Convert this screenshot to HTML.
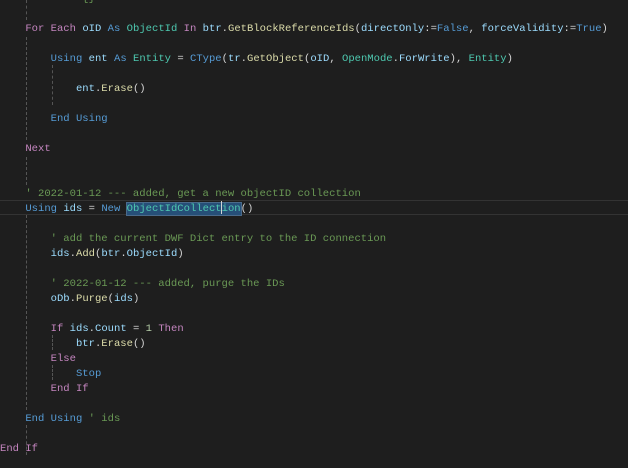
<!DOCTYPE html>
<html><head><style>
body{margin:0;width:628px;height:464px;background:#1e1e1e;overflow:hidden;position:relative;font-family:"Liberation Mono",monospace;font-size:10.55px;}
.l{position:absolute;left:0;height:15px;line-height:15px;white-space:pre;color:#d4d4d4;}
.k{color:#569cd6}.c{color:#c586c0}.t{color:#4ec9b0}.f{color:#dcdcaa}.v{color:#9cdcfe}.m{color:#6a9955}.n{color:#b5cea8}
.g{position:absolute;width:0;border-left:1px dashed #555;}
.cur{position:absolute;left:0;width:628px;top:200px;height:13px;border-top:1px solid #333;border-bottom:1px solid #333;}
.sel{background:#264f78;outline:1px solid #4a6a8a;}
#w{position:absolute;left:0;top:4px;width:628px;height:464px;}
</style></head><body>
<div class="cur"></div>
<div id="w">
<div class="g" style="left:26px;top:-4px;height:20px"></div>
<div class="g" style="left:26px;top:33px;height:103px"></div>
<div class="g" style="left:26px;top:153px;height:28px"></div>
<div class="g" style="left:26px;top:211px;height:195px"></div>
<div class="g" style="left:26px;top:421px;height:30px"></div>
<div class="g" style="left:52px;top:61px;height:40px"></div>
<div class="g" style="left:52px;top:331px;height:15px"></div>
<div class="g" style="left:52px;top:361px;height:15px"></div>
<div class="l" style="top:-12.5px">             <span class="m">{}</span></div>
<div class="l" style="top:17.5px">    <span class="c">For Each</span> <span class="v">oID</span> <span class="k">As</span> <span class="t">ObjectId</span> <span class="c">In</span> <span class="v">btr</span>.<span class="f">GetBlockReferenceIds</span>(<span class="v">directOnly</span>:=<span class="k">False</span>, <span class="v">forceValidity</span>:=<span class="k">True</span>)</div>
<div class="l" style="top:47.5px">        <span class="k">Using</span> <span class="v">ent</span> <span class="k">As</span> <span class="t">Entity</span> = <span class="k">CType</span>(<span class="v">tr</span>.<span class="f">GetObject</span>(<span class="v">oID</span>, <span class="t">OpenMode</span>.<span class="v">ForWrite</span>), <span class="t">Entity</span>)</div>
<div class="l" style="top:77.5px">            <span class="v">ent</span>.<span class="f">Erase</span>()</div>
<div class="l" style="top:107.5px">        <span class="k">End Using</span></div>
<div class="l" style="top:137.5px">    <span class="c">Next</span></div>
<div class="l" style="top:182.5px">    <span class="m">' 2022-01-12 --- added, get a new objectID collection</span></div>
<div class="l" style="top:197.5px">    <span class="k">Using</span> <span class="v">ids</span> = <span class="k">New</span> <span class="t sel">ObjectIdCollection</span>()</div>
<div class="l" style="top:227.5px">        <span class="m">' add the current DWF Dict entry to the ID connection</span></div>
<div class="l" style="top:242.5px">        <span class="v">ids</span>.<span class="f">Add</span>(<span class="v">btr</span>.<span class="v">ObjectId</span>)</div>
<div class="l" style="top:272.5px">        <span class="m">' 2022-01-12 --- added, purge the IDs</span></div>
<div class="l" style="top:287.5px">        <span class="v">oDb</span>.<span class="f">Purge</span>(<span class="v">ids</span>)</div>
<div class="l" style="top:317.5px">        <span class="c">If</span> <span class="v">ids</span>.<span class="v">Count</span> = <span class="n">1</span> <span class="c">Then</span></div>
<div class="l" style="top:332.5px">            <span class="v">btr</span>.<span class="f">Erase</span>()</div>
<div class="l" style="top:347.5px">        <span class="c">Else</span></div>
<div class="l" style="top:362.5px">            <span class="k">Stop</span></div>
<div class="l" style="top:377.5px">        <span class="c">End If</span></div>
<div class="l" style="top:407.5px">    <span class="k">End Using</span> <span class="m">' ids</span></div>
<div class="l" style="top:437.5px"><span class="c">End If</span></div>
<div style="position:absolute;left:221px;top:197px;width:1px;height:13px;background:#d4d4d4"></div>
</div>
</body></html>
